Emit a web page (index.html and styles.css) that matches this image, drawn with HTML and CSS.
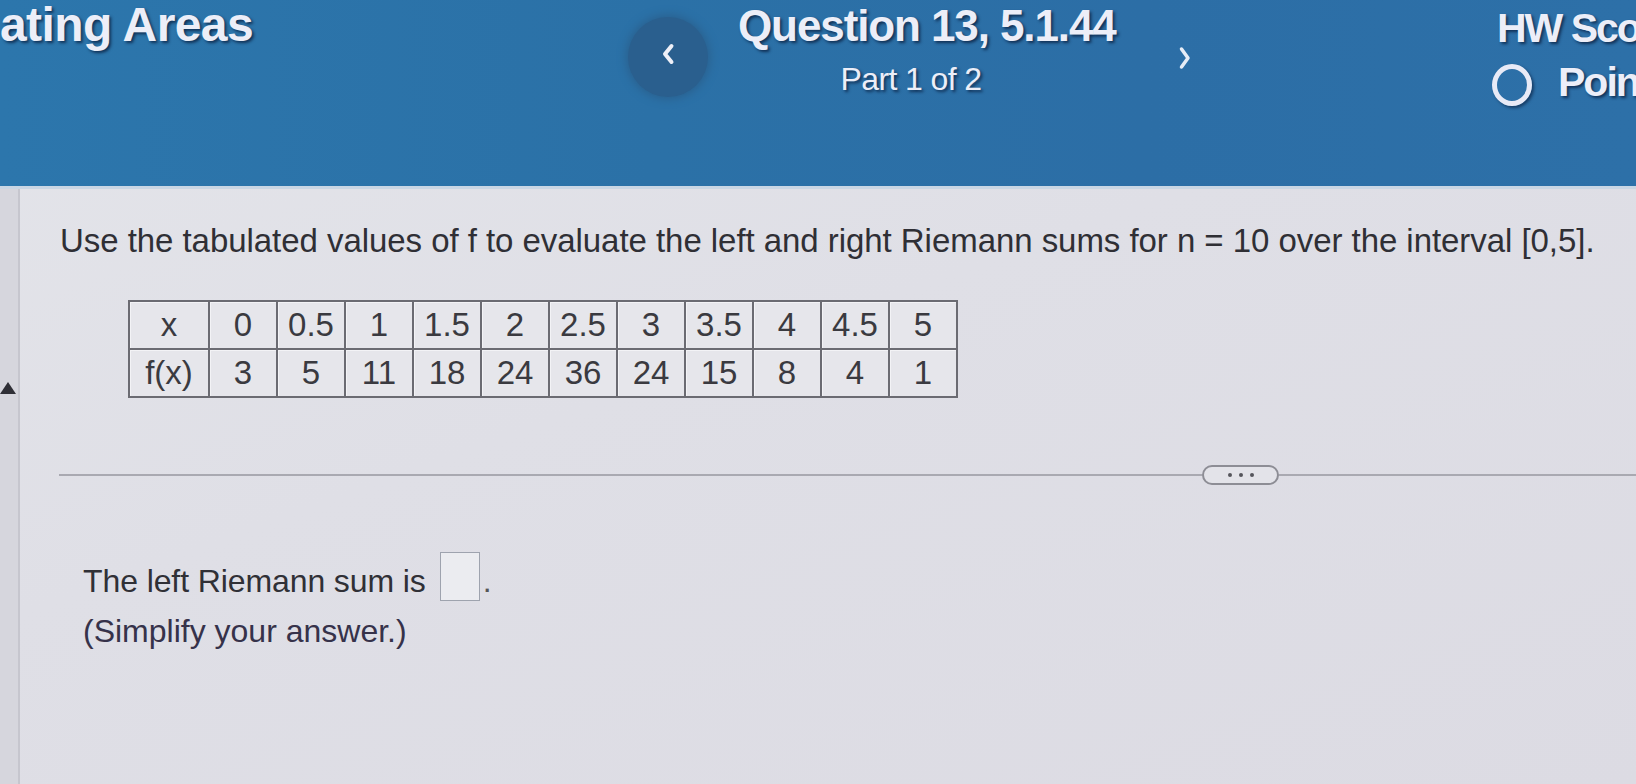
FILE: index.html
```html
<!DOCTYPE html>
<html lang="en">
<head>
<meta charset="utf-8">
<title>Question 13, 5.1.44</title>
<link rel="stylesheet" href="styles.css">
</head>
<body>
<div class="page">
  <header class="topbar">
    <div class="title">ating Areas</div>
    <button class="nav-prev" aria-label="Previous question">
      <svg width="14" height="22" viewBox="0 0 14 22"><path d="M10.5 3 L4 11 L10.5 19" fill="none" stroke="#eef0f8" stroke-width="4" stroke-linecap="round" stroke-linejoin="round"/></svg>
    </button>
    <div class="qinfo">
      <div class="qtitle">Question 13, 5.1.44</div>
      <div class="qpart">Part 1 of 2</div>
    </div>
    <div class="nav-next" aria-label="Next question">
      <svg width="14" height="24" viewBox="0 0 14 24"><path d="M3.5 3 L10 12 L3.5 21" fill="none" stroke="#e6ecf6" stroke-width="3.5" stroke-linecap="round" stroke-linejoin="round"/></svg>
    </div>
    <div class="score">
      <div class="score-title">HW Score</div>
      <div class="score-row"><span class="ring"></span><span class="score-text">Points</span></div>
    </div>
  </header>
  <div class="body">
    <div class="strip"><span class="tri"></span></div>
    <main class="content">
      <p class="question">Use the tabulated values of f to evaluate the left and right Riemann sums for n = 10 over the interval [0,5].</p>
      <table class="values">
        <tr><td class="head">x</td><td>0</td><td>0.5</td><td>1</td><td>1.5</td><td>2</td><td>2.5</td><td>3</td><td>3.5</td><td>4</td><td>4.5</td><td>5</td></tr>
        <tr><td class="head">f(x)</td><td>3</td><td>5</td><td>11</td><td>18</td><td>24</td><td>36</td><td>24</td><td>15</td><td>8</td><td>4</td><td>1</td></tr>
      </table>
      <div class="divider">
        <span class="line line-left"></span>
        <span class="pill"><i></i><i></i><i></i></span>
        <span class="line line-right"></span>
      </div>
      <div class="answer">
        <span class="answer-text">The left Riemann sum is</span>
        <span class="answer-box"></span>
        <span class="answer-dot">.</span>
      </div>
      <p class="hint">(Simplify your answer.)</p>
    </main>
  </div>
</div>
</body>
</html>
```

FILE: styles.css
```css
html, body {
  margin: 0;
  padding: 0;
}
body {
  width: 1636px;
  height: 784px;
  overflow: hidden;
  font-family: "Liberation Sans", Arial, sans-serif;
  background: #dfdfe5;
}
.page {
  width: 1636px;
  height: 784px;
  display: flex;
  flex-direction: column;
  background: linear-gradient(160deg, #e4e5ea 0%, #dfdfe6 45%, #dcdbe3 100%);
}

/* ---------- header ---------- */
.topbar {
  height: 186px;
  flex: none;
  display: flex;
  align-items: flex-start;
  background: linear-gradient(90deg, #2c76ac 0%, #2b71a7 40%, #2c6ea6 70%, #2d70a8 100%);
  border-bottom: 3px solid #c9d6e4;
  color: #eceef8;
  text-shadow: 2px 2px 3px rgba(8, 28, 60, 0.75);
  overflow: hidden;
}
.title {
  width: 628px;
  flex: none;
  font-weight: bold;
  font-size: 48px;
  line-height: 50px;
  letter-spacing: -0.6px;
  white-space: nowrap;
}
.nav-prev {
  flex: none;
  width: 80px;
  height: 80px;
  margin-top: 17px;
  border: 0;
  padding: 0;
  border-radius: 50%;
  background: #2a5f8e;
  box-shadow: 0 0 8px 2px #2a618f;
  display: flex;
  align-items: center;
  justify-content: center;
}
.nav-prev svg {
  margin-top: -6px;
}
.qinfo {
  flex: none;
  width: 380px;
  margin-left: 30px;
  padding-top: 2px;
  text-align: center;
}
.qtitle {
  font-weight: bold;
  font-size: 44px;
  line-height: 48px;
  letter-spacing: -1.1px;
  white-space: nowrap;
  text-align: left;
}
.qpart {
  margin-top: 11px;
  font-size: 32px;
  line-height: 36px;
  letter-spacing: -0.6px;
  padding-right: 34px;
}
.nav-next {
  flex: none;
  margin-left: 60px;
  margin-top: 46px;
  width: 14px;
  height: 24px;
}
.score {
  flex: none;
  margin-left: 300px;
  padding-top: 4px;
  white-space: nowrap;
}
.score-title {
  font-weight: bold;
  font-size: 41px;
  line-height: 48px;
  padding-left: 5px;
  letter-spacing: -2px;
}
.score-row {
  display: flex;
  align-items: flex-start;
  margin-top: 6px;
}
.ring {
  width: 30px;
  height: 32px;
  border: 5px solid #e8eaf6;
  border-radius: 50%;
  margin-top: 6px;
  box-shadow: 2px 2px 3px rgba(8, 28, 60, 0.6);
  flex: none;
}
.score-text {
  margin-left: 26px;
  font-weight: bold;
  font-size: 41px;
  line-height: 48px;
  letter-spacing: -2px;
}

/* ---------- body ---------- */
.body {
  flex: 1;
  display: flex;
}
.strip {
  width: 18px;
  flex: none;
  background: #d6d6dd;
  border-right: 2px solid #c6c6ce;
  position: relative;
}
.tri {
  position: absolute;
  left: 0;
  top: 193px;
  width: 0;
  height: 0;
  border-left: 8px solid transparent;
  border-right: 8px solid transparent;
  border-bottom: 12px solid #2f2f36;
}
.content {
  flex: 1;
  padding-left: 40px;
  padding-top: 32px;
  color: #2f2f35;
}
.question {
  margin: 0;
  font-size: 33px;
  line-height: 40px;
  white-space: nowrap;
  letter-spacing: -0.05px;
}
.values {
  margin-top: 39px;
  margin-left: 68px;
  border-collapse: collapse;
  border: 2px solid #5c5c63;
  background: #e6e6eb;
}
.values td {
  width: 66px;
  height: 46px;
  padding: 0;
  border: 2px solid #6b6b72;
  text-align: center;
  font-size: 33px;
  line-height: 44px;
  color: #3a3a40;
  box-shadow: inset 1px 1px 0 #f3f3f6;
}
.values td.head {
  width: 78px;
}
.divider {
  margin-top: 67px;
  margin-left: -1px;
  display: flex;
  align-items: center;
  height: 20px;
}
.line {
  height: 2px;
  background: #a9a9b1;
}
.line-left {
  width: 1143px;
  flex: none;
}
.line-right {
  flex: 1;
}
.pill {
  flex: none;
  width: 73px;
  height: 16px;
  border: 2px solid #8d8d95;
  border-radius: 10px;
  background: #e3e3e9;
  display: flex;
  align-items: center;
  justify-content: center;
  gap: 7px;
}
.pill i {
  width: 4px;
  height: 4px;
  border-radius: 50%;
  background: #55555c;
}
.answer {
  margin-top: 66px;
  padding-left: 23px;
  display: flex;
  align-items: flex-end;
  height: 50px;
}
.answer-text {
  font-size: 32px;
  line-height: 40px;
  color: #303036;
  letter-spacing: -0.1px;
}
.answer-box {
  width: 38px;
  height: 47px;
  margin-left: 14px;
  border: 1.5px solid #9ea3ae;
  background: #ebecf0;
}
.answer-dot {
  font-size: 32px;
  line-height: 40px;
  margin-left: 3px;
  color: #555;
}
.hint {
  margin: 10px 0 0;
  padding-left: 23px;
  font-size: 32px;
  line-height: 40px;
  color: #36324a;
}
```
